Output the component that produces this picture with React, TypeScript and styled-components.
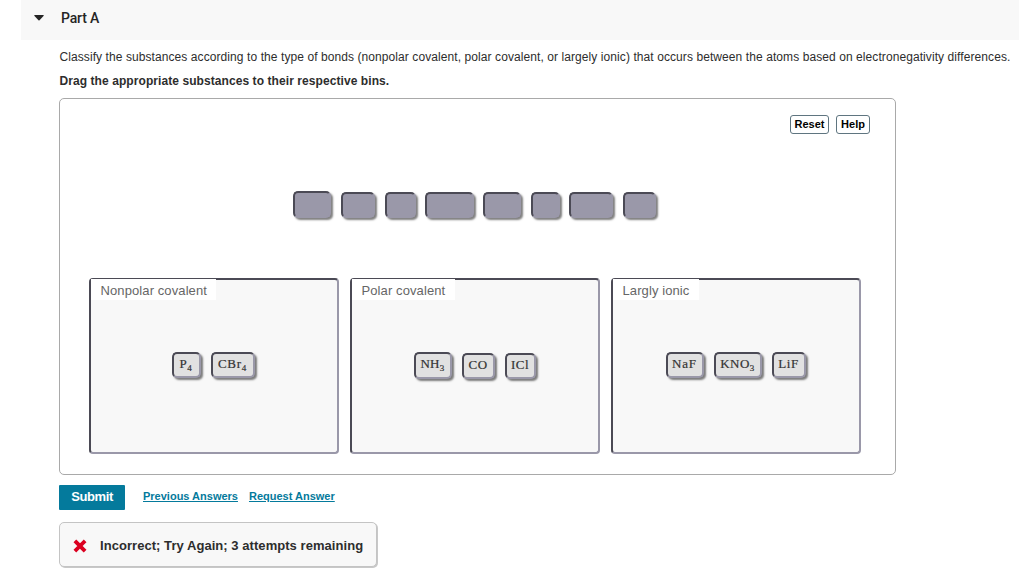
import React from 'react';
import styled, { createGlobalStyle } from 'styled-components';

const GlobalStyle = createGlobalStyle`
  * {
    box-sizing: border-box;
  }

  body {
    margin: 0;
    background: #fff;
    color: #2d2d2d;
    font-family: 'Liberation Sans', Arial, sans-serif;
    overflow: hidden;
  }
`;

// Styled components
const Page = styled.div`
  width: 1019px;
  height: 571px;
  padding-left: 21px;
`;

const PartHeader = styled.header`
  display: flex;
  align-items: center;
  height: 40px;
  padding: 0 0 4px 13px;
  background-color: #f8f8f8;
`;

const PartTitle = styled.h2`
  margin: 0 0 0 17px;
  font-family: Roboto, sans-serif;
  font-size: 14px;
  font-weight: 500;
  line-height: 20px;
  letter-spacing: -0.15px;
  color: #252525;
`;

const Content = styled.main`
  padding-left: 38px;
`;

const Question = styled.p`
  margin: 0;
  padding: 9px 0 0 0.5px;
  font-size: 12px;
  line-height: 16px;
  letter-spacing: 0.082px;
  white-space: nowrap;
`;

const Instruction = styled(Question)`
  padding-top: 8px;
  font-weight: bold;
  letter-spacing: 0.075px;
`;

const Panel = styled.section`
  width: 837px;
  height: 377px;
  margin-top: 9px;
  padding: 16px 34px 0 29px;
  border: 1px solid #a9a9a9;
  border-radius: 5px;
`;

const Toolbar = styled.div`
  display: flex;
  justify-content: flex-end;
  gap: 7px;
  margin-right: -9px;
`;

const ToolButton = styled.button<{ $width: number }>`
  width: ${(props) => props.$width}px;
  height: 19px;
  padding: 0;
  border: 1px solid #5f7580;
  border-radius: 3px;
  background: #fff;
  color: #000;
  font-family: inherit;
  font-size: 11px;
  font-weight: bold;
  line-height: 17px;
`;

const SlotRow = styled.div`
  display: flex;
  align-items: flex-end;
  height: 27px;
  margin: 57px 0 0 204px;
`;

const Tile = styled.div<{ $width: number; $height?: number; $gap?: number }>`
  width: ${(props) => props.$width}px;
  height: ${(props) => props.$height || 26}px;
  margin-right: ${(props) => props.$gap ?? 10}px;
  border: 2px solid;
  border-color: #4b4a55 #9a98a9 #9a98a9 #4b4a55;
  border-radius: 5px;
  box-shadow: 2px 2px 2px rgba(0, 0, 0, 0.5);
`;

const Slot = styled(Tile)`
  background-color: #9a98a9;
`;

const Chip = styled(Tile)`
  display: flex;
  justify-content: center;
  background-color: #e1e1e1;
  color: #333;
  font-family: 'Liberation Serif', serif;
  font-size: 13px;
  line-height: 19px;
  white-space: nowrap;
  -webkit-text-stroke: 0.2px #333;

  &:last-child {
    margin-right: 0;
  }
`;

const Formula = styled.span<{ $spacing: number }>`
  margin-left: -1px;
  letter-spacing: ${(props) => props.$spacing}px;

  sub {
    font-size: 9px;
    line-height: 0;
    vertical-align: -3px;
  }
`;

const Bins = styled.div`
  display: flex;
  gap: 11px;
  margin-top: 60px;
`;

const Bin = styled.div`
  width: 250px;
  height: 176px;
  border: 2px solid;
  border-color: #4b4a55 #9a98a9 #9a98a9 #4b4a55;
  border-radius: 4px;
  background-color: #f8f8f8;
`;

const BinLabel = styled.div<{ $width: number }>`
  width: ${(props) => props.$width}px;
  height: 21px;
  margin-top: -1px;
  padding-left: 9.5px;
  background-color: #fff;
  color: #666;
  font-size: 13px;
  line-height: 23px;
  letter-spacing: 0.1px;
  white-space: nowrap;
`;

const ChipRow = styled.div<{ $left: number }>`
  display: flex;
  align-items: flex-end;
  margin: 52px 0 0 ${(props) => props.$left}px;
`;

const Actions = styled.div`
  display: flex;
  align-items: center;
  height: 25px;
  margin-top: 10px;
`;

const SubmitButton = styled.button`
  width: 66px;
  height: 25px;
  margin-right: 18px;
  padding: 0 0 2px;
  border: none;
  border-radius: 1px;
  background-color: #047a9c;
  color: #fff;
  font-family: inherit;
  font-size: 13px;
  font-weight: bold;
  letter-spacing: -0.4px;
`;

const AnswerLink = styled.a`
  margin-right: 11px;
  color: #047a9c;
  font-size: 11px;
  font-weight: bold;
  line-height: 14px;
  padding-bottom: 3px;
  text-decoration: underline;
`;

const Feedback = styled.div`
  display: flex;
  align-items: center;
  width: 318px;
  height: 45px;
  margin-top: 12px;
  padding: 2px 0 0 13px;
  border: 1px solid #c4c4c4;
  border-radius: 5px;
  box-shadow: 1px 1px 0 #c8c8c8;
  background-color: #f8f8f8;
  font-size: 13px;
  font-weight: bold;
  letter-spacing: 0.05px;
  white-space: nowrap;

  svg {
    margin-right: 13px;
  }
`;

interface Substance {
  parts: string;
  sub?: string;
  width: number;
  height?: number;
  spacing: number;
}

interface BinData {
  label: string;
  labelWidth: number;
  left: number;
  substances: Substance[];
}

const slots = [
  { width: 38, height: 27, gap: 10 },
  { width: 34, gap: 10 },
  { width: 31, gap: 9 },
  { width: 49, gap: 9 },
  { width: 38, gap: 10 },
  { width: 29, gap: 9 },
  { width: 44, gap: 10 },
  { width: 33, gap: 0 },
];

const bins: BinData[] = [
  {
    label: 'Nonpolar covalent',
    labelWidth: 125,
    left: 81,
    substances: [
      { parts: 'P', sub: '4', width: 29, spacing: 0.7 },
      { parts: 'CBr', sub: '4', width: 44, spacing: 0.7 },
    ],
  },
  {
    label: 'Polar covalent',
    labelWidth: 103,
    left: 62,
    substances: [
      { parts: 'NH', sub: '3', width: 38, height: 27, spacing: 0.3 },
      { parts: 'CO', width: 33, spacing: 0.4 },
      { parts: 'ICl', width: 31, spacing: 0.4 },
    ],
  },
  {
    label: 'Largly ionic',
    labelWidth: 86,
    left: 53,
    substances: [
      { parts: 'NaF', width: 38, spacing: 0.8 },
      { parts: 'KNO', sub: '3', width: 48, spacing: 0.5 },
      { parts: 'LiF', width: 34, spacing: 0.6 },
    ],
  },
];

const App: React.FC = () => {
  return (
    <Page>
      <GlobalStyle />
      <PartHeader>
        <svg width="10" height="6" viewBox="0 0 10 6">
          <path d="M0.5 0H9.5Q10 0.4 9.5 1L5.5 5.3Q5 5.8 4.5 5.3L0.5 1Q0 0.4 0.5 0Z" fill="#252525" />
        </svg>
        <PartTitle>Part A</PartTitle>
      </PartHeader>
      <Content>
        <Question>
          Classify the substances according to the type of bonds (nonpolar covalent, polar covalent, or largely ionic)
          that occurs between the atoms based on electronegativity differences.
        </Question>
        <Instruction>Drag the appropriate substances to their respective bins.</Instruction>
        <Panel>
          <Toolbar>
            <ToolButton $width={39}>Reset</ToolButton>
            <ToolButton $width={34}>Help</ToolButton>
          </Toolbar>
          <SlotRow>
            {slots.map((slot, i) => (
              <Slot key={i} $width={slot.width} $height={slot.height} $gap={slot.gap} />
            ))}
          </SlotRow>
          <Bins>
            {bins.map((bin) => (
              <Bin key={bin.label}>
                <BinLabel $width={bin.labelWidth}>{bin.label}</BinLabel>
                <ChipRow $left={bin.left}>
                  {bin.substances.map((s) => (
                    <Chip key={s.parts} $width={s.width} $height={s.height}>
                      <Formula $spacing={s.spacing}>
                        {s.parts}
                        {s.sub && <sub>{s.sub}</sub>}
                      </Formula>
                    </Chip>
                  ))}
                </ChipRow>
              </Bin>
            ))}
          </Bins>
        </Panel>
        <Actions>
          <SubmitButton>Submit</SubmitButton>
          <AnswerLink>Previous Answers</AnswerLink>
          <AnswerLink>Request Answer</AnswerLink>
        </Actions>
        <Feedback>
          <svg width="14" height="14" viewBox="0 0 14 14">
            <path
              d="M3.2 3.2L10.8 10.8M10.8 3.2L3.2 10.8"
              stroke="#db0020"
              strokeWidth="3.8"
              strokeLinecap="square"
              strokeLinejoin="round"
            />
          </svg>
          Incorrect; Try Again; 3 attempts remaining
        </Feedback>
      </Content>
    </Page>
  );
};

export default App;
